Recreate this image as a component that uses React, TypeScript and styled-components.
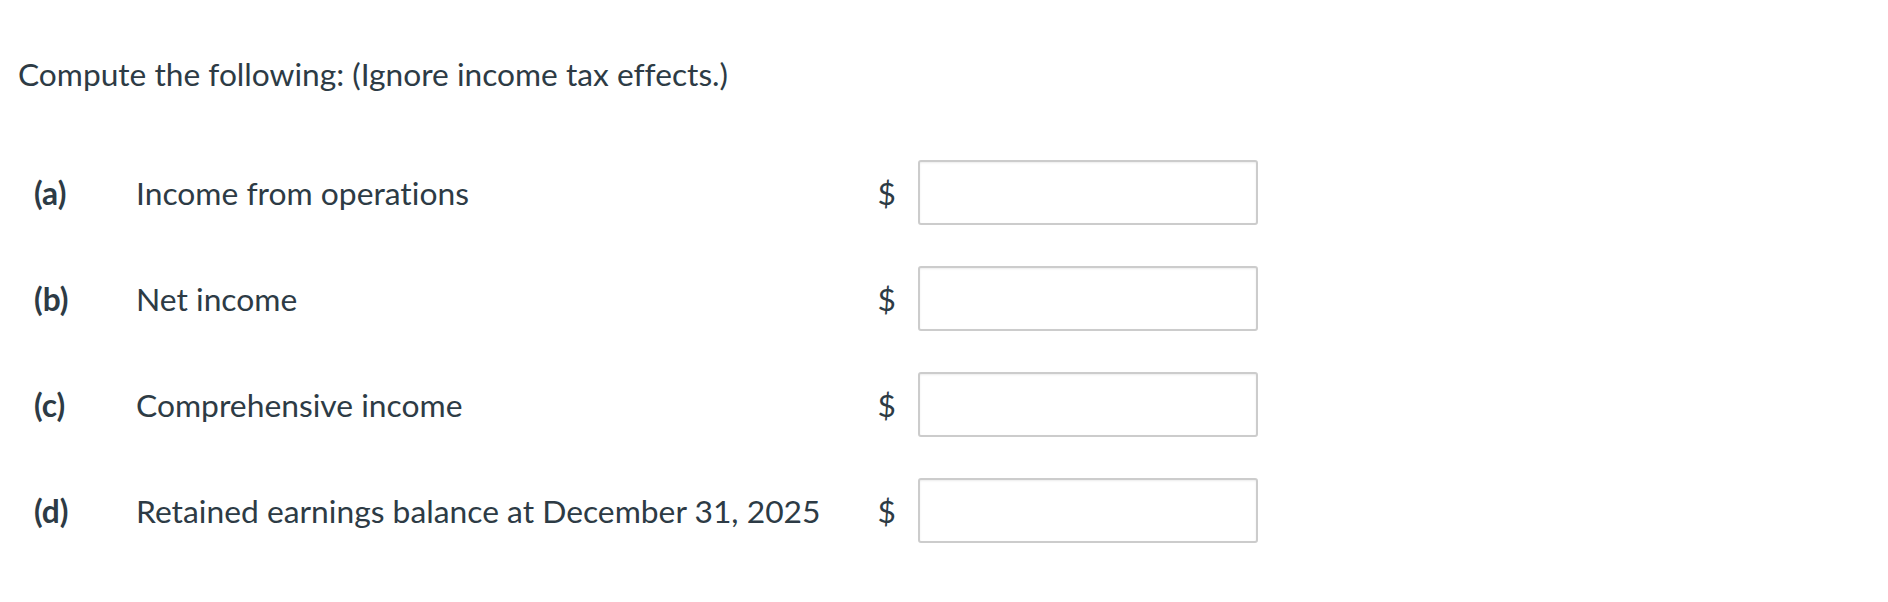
import React from "react";
import styled, { createGlobalStyle } from "styled-components";

const GlobalStyle = createGlobalStyle`
  html, body {
    margin: 0;
    padding: 0;
    background: #ffffff;
  }
  body {
    font-family: Lato, "Noto Sans", sans-serif;
    color: #2d3b45;
    font-variant-ligatures: none;
  }
`;

const Page = styled.div`
  padding: 54px 0 0 18px;
`;

const Heading = styled.p`
  margin: 0;
  font-size: 31.7px;
  line-height: 40px;
`;

const Rows = styled.div`
  display: flex;
  flex-direction: column;
  gap: 41px;
  margin-top: 66px;
  padding-left: 16px;
`;

const Row = styled.div`
  display: grid;
  grid-template-columns: 102px 734px 48px 340px;
  align-items: center;
  height: 65px;
`;

const Letter = styled.span`
  font-size: 31.7px;
  font-weight: 700;
`;

const Label = styled.span`
  font-size: 31.8px;
`;

const Dollar = styled.span`
  font-size: 31.7px;
  justify-self: end;
  padding-right: 22px;
`;

const AmountInput = styled.input`
  box-sizing: border-box;
  width: 340px;
  height: 65px;
  border: 2px solid #cccccc;
  border-radius: 3px;
  box-shadow: inset 0 1px 2px rgba(0, 0, 0, 0.08);
  background: #fff;
  font: inherit;
  font-size: 24px;
  padding: 0 10px;
  outline: none;
`;

const items = [
  { letter: "(a)", label: "Income from operations" },
  { letter: "(b)", label: "Net income" },
  { letter: "(c)", label: "Comprehensive income" },
  { letter: "(d)", label: "Retained earnings balance at December 31, 2025" },
];

export default function App() {
  return (
    <>
      <GlobalStyle />
      <Page>
        <Heading>Compute the following: (Ignore income tax effects.)</Heading>
        <Rows>
          {items.map((it) => (
            <Row key={it.letter}>
              <Letter>{it.letter}</Letter>
              <Label>{it.label}</Label>
              <Dollar>$</Dollar>
              <AmountInput type="text" aria-label={it.label} />
            </Row>
          ))}
        </Rows>
      </Page>
    </>
  );
}
